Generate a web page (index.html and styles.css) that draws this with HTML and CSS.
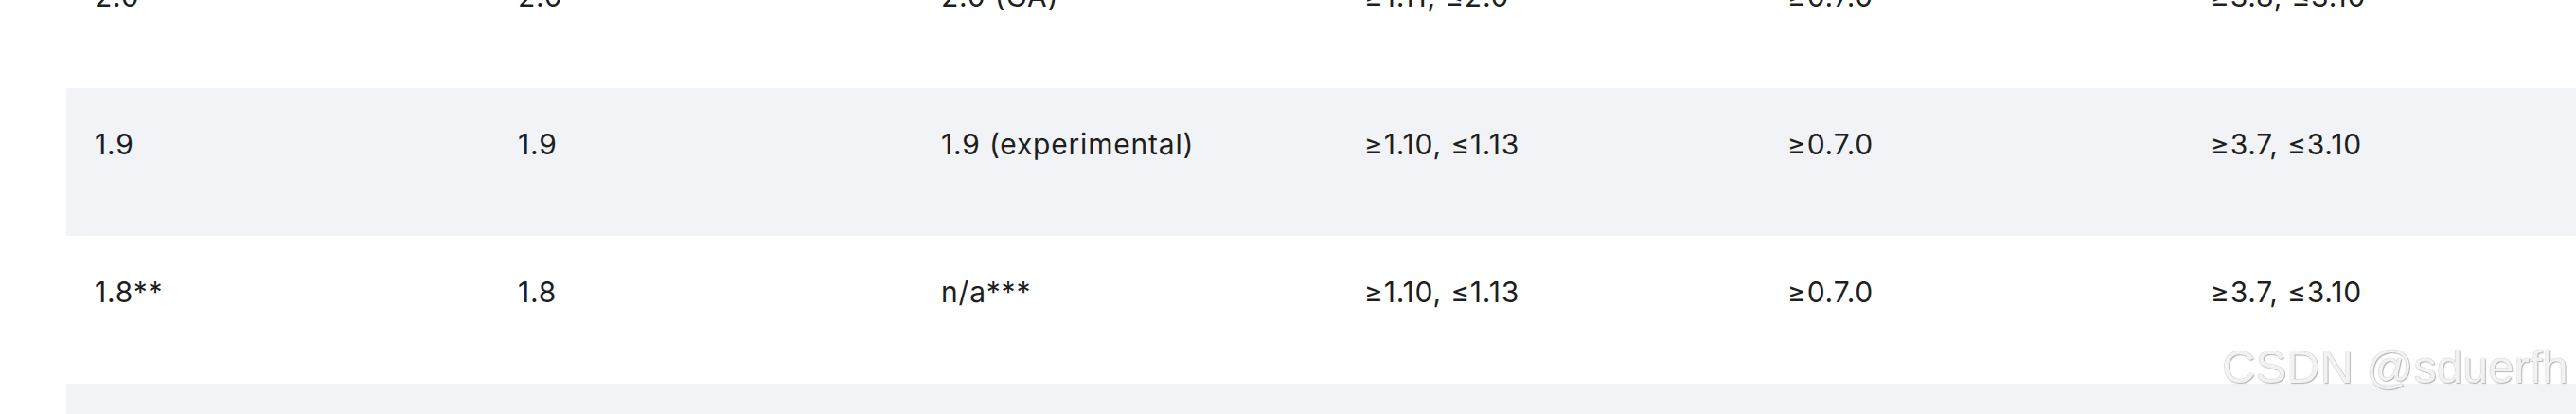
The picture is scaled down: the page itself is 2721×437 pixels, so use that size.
FILE: index.html
```html
<!DOCTYPE html>
<html lang="en">
<head>
<meta charset="utf-8">
<title>Compatibility table</title>
<link rel="stylesheet" href="styles.css">
</head>
<body>
<div class="page">
  <table class="compat">
    <tbody>
      <tr>
        <td>2.0</td><td>2.0</td><td>2.0 (GA)</td><td>≥1.11, ≤2.0</td><td>≥0.7.0</td><td>≥3.8, ≤3.10</td>
      </tr>
      <tr class="band">
        <td>1.9</td><td>1.9</td><td>1.9 (experimental)</td><td>≥1.10, ≤1.13</td><td>≥0.7.0</td><td>≥3.7, ≤3.10</td>
      </tr>
      <tr>
        <td>1.8**</td><td>1.8</td><td>n/a***</td><td>≥1.10, ≤1.13</td><td>≥0.7.0</td><td>≥3.7, ≤3.10</td>
      </tr>
      <tr class="band">
        <td>1.7</td><td>1.7</td><td>n/a***</td><td>≥1.10, ≤1.12</td><td>≥0.7.0</td><td>≥3.6, ≤3.9</td>
      </tr>
    </tbody>
  </table>
  <div class="watermark">CSDN @sduerfh</div>
</div>
</body>
</html>
```
FILE: styles.css
```css
html, body {
  margin: 0;
  padding: 0;
  background: #ffffff;
  overflow: hidden;
}

.page {
  position: relative;
  width: 2721px;
  height: 437px;
  overflow: hidden;
  padding-left: 70px;
  box-sizing: border-box;
}

.compat {
  border-collapse: collapse;
  table-layout: fixed;
  width: 2682px;
  margin-top: -63px;
  font-family: "Inter", "Noto Sans", sans-serif;
  font-size: 30px;
  letter-spacing: 0.8px;
  color: #1c1e21;
}

.compat td {
  width: 447px;
  height: 156px;
  box-sizing: border-box;
  padding: 37px 20px 74px 30px;
  line-height: 45px;
  vertical-align: top;
  white-space: nowrap;
}

.compat tr.band {
  background: #f2f3f6;
}

.watermark {
  position: absolute;
  left: 2347px;
  top: 363px;
  font-family: "Liberation Sans", Arial, sans-serif;
  font-size: 49px;
  line-height: 49px;
  color: #f2f2f2;
  text-shadow: 0 0 1px #a0a0a0, 1px 1px 1px #b8b8b8;
  white-space: nowrap;
}
```
